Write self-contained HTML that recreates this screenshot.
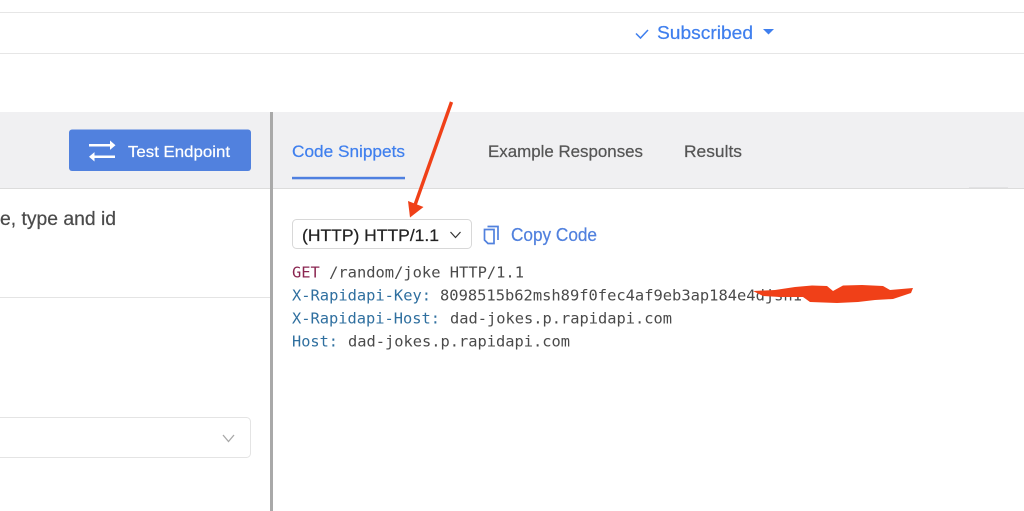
<!DOCTYPE html>
<html lang="en">
<head>
<meta charset="utf-8">
<title>Code Snippets</title>
<style>
html,body{margin:0;padding:0;background:#fff;width:1024px;height:511px;overflow:hidden}
svg{display:block}
text{font-family:"Liberation Sans",sans-serif;stroke-width:.22px}
.m{font-family:"DejaVu Sans Mono","Liberation Mono",monospace;font-size:15.4px;stroke-width:0}
</style>
</head>
<body>
<svg width="1024" height="511" viewBox="0 0 1024 511" xmlns="http://www.w3.org/2000/svg">
<rect width="1024" height="511" fill="#fff"/>
<!-- top bar -->
<rect x="0" y="12" width="1024" height="1" fill="#e6e6e6"/>
<rect x="0" y="53" width="1024" height="1" fill="#e6e6e6"/>
<path d="M636 33.500l4.500 4.500 7.500-8" fill="none" stroke="#3f7fee" stroke-width="1.500"/>
<text x="657" y="39" font-size="18" fill="#3f7fee" stroke="#3f7fee" textLength="96" lengthAdjust="spacingAndGlyphs">Subscribed</text>
<path d="M763 29h11l-5.500 5.500z" fill="#3f7fee"/>
<!-- header band -->
<rect x="0" y="112" width="1024" height="76" fill="#f0f0f2"/>
<rect x="0" y="188" width="1024" height="1" fill="#dcdcdc"/>
<rect x="969" y="187" width="39" height="1" fill="#e2e2e4"/>
<!-- button -->
<rect x="69" y="129.500" width="182" height="41.500" rx="3" fill="#5181de"/>
<path d="M89 144h21v-3.500l5.500 4.700-5.500 4.700v-3.400h-21z" fill="#fff"/>
<path d="M115 155.500h-20.500v-3.400l-5.500 4.700 5.500 4.700v-3.500h20.500z" fill="#fff"/>
<text x="128" y="157" font-size="16" fill="#fff" stroke="#fff" textLength="102" lengthAdjust="spacingAndGlyphs">Test Endpoint</text>
<!-- left text -->
<text x="0" y="225" font-size="19" fill="#4b4b4b" stroke="#4b4b4b" textLength="116" lengthAdjust="spacingAndGlyphs">e, type and id</text>
<rect x="0" y="297" width="270" height="1" fill="#e4e4e4"/>
<rect x="-10" y="417.500" width="260.500" height="40" rx="4" fill="#fff" stroke="#e4e4e4"/>
<path d="M223 435l5.500 6.500 5.500-6.500" fill="none" stroke="#a8a8a8" stroke-width="1.300"/>
<!-- divider -->
<rect x="270" y="112" width="3" height="399" fill="#a9a9a9"/>
<!-- tabs -->
<text x="292" y="157" font-size="17" fill="#3f7fee" stroke="#3f7fee" textLength="113" lengthAdjust="spacingAndGlyphs">Code Snippets</text>
<rect x="292" y="176.800" width="113" height="2.500" fill="#4f80e0"/>
<text x="488" y="157" font-size="17" fill="#555" stroke="#555" textLength="155" lengthAdjust="spacingAndGlyphs">Example Responses</text>
<text x="684" y="157" font-size="17" fill="#555" stroke="#555" textLength="58" lengthAdjust="spacingAndGlyphs">Results</text>
<!-- select -->
<rect x="292.500" y="219.500" width="179" height="29" rx="4" fill="#fff" stroke="#d8d8d8"/>
<text x="302" y="241" font-size="17" fill="#222" stroke="#222" textLength="137" lengthAdjust="spacingAndGlyphs">(HTTP) HTTP/1.1</text>
<path d="M450.500 232l5 5.500 5-5.500" fill="none" stroke="#333" stroke-width="1.200"/>
<!-- copy icon -->
<path d="M484.500 229.500h9.500v14h-6l-3.500-3.500z" fill="none" stroke="#5181de" stroke-width="1.700"/>
<path d="M487.500 226.500h10.500v13.500" fill="none" stroke="#5181de" stroke-width="1.700"/>
<text x="511" y="241" font-size="18" fill="#5181de" stroke="#5181de" textLength="86" lengthAdjust="spacingAndGlyphs">Copy Code</text>
<!-- code -->
<text class="m" x="292" y="277.600" textLength="232" lengthAdjust="spacingAndGlyphs"><tspan fill="#8a2550">GET</tspan><tspan fill="#4a4a4a"> /random/joke HTTP/1.1</tspan></text>
<text class="m" x="292" y="300.600" fill="#2f6f9f" textLength="139" lengthAdjust="spacingAndGlyphs">X-Rapidapi-Key:</text>
<text class="m" x="440" y="300.600" fill="#4a4a4a" textLength="362" lengthAdjust="spacingAndGlyphs">8098515b62msh89f0fec4af9eb3ap184e4djsn1</text>
<text class="m" x="292" y="323.600" fill="#2f6f9f" textLength="148" lengthAdjust="spacingAndGlyphs">X-Rapidapi-Host:</text>
<text class="m" x="450" y="323.600" fill="#4a4a4a" textLength="222" lengthAdjust="spacingAndGlyphs">dad-jokes.p.rapidapi.com</text>
<text class="m" x="292" y="346.600" fill="#2f6f9f" textLength="46" lengthAdjust="spacingAndGlyphs">Host:</text>
<text class="m" x="348" y="346.600" fill="#4a4a4a" textLength="222" lengthAdjust="spacingAndGlyphs">dad-jokes.p.rapidapi.com</text>
<!-- scribble -->
<path d="M753 291L775 290L795 287L812 285.500L827 286L833 291L843 285.500L862 285L883 286L890 290L913 288L911 293L893 299L875 300L858 302L837 303L810 302L803 297L780 297L763 296Z" fill="#f04018"/>
<!-- arrow -->
<path d="M451.500 102L415 205" fill="none" stroke="#f04018" stroke-width="3.400"/>
<path d="M410 217.500L408 201L423.500 207z" fill="#f04018"/>
</svg>
</body>
</html>
